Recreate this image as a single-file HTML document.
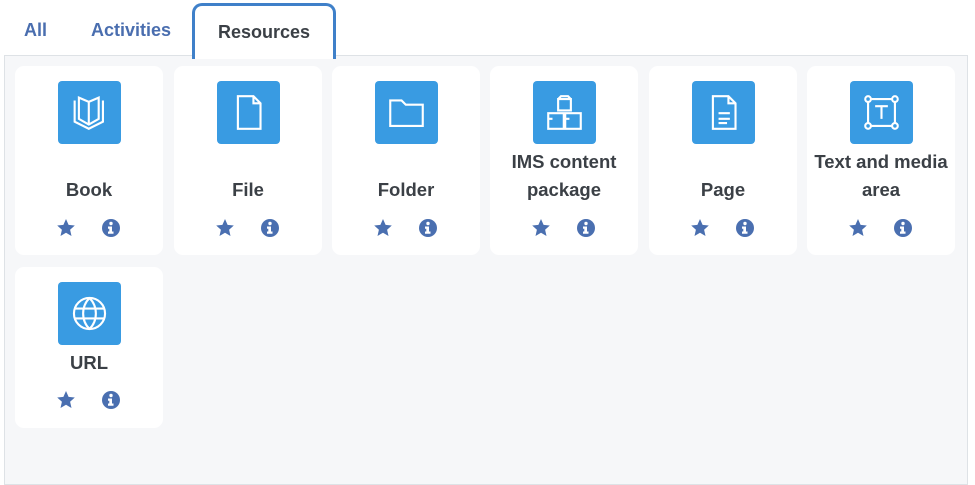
<!DOCTYPE html>
<html><head><style>
*{margin:0;padding:0;box-sizing:border-box}
body{width:975px;height:470px;background:#fff;font-family:"Liberation Sans",sans-serif;position:relative;overflow:hidden}
.cont{position:absolute;left:4px;top:55px;width:964px;height:430px;background:#f6f7f9;border:1px solid #dee2e6}
.tab{position:absolute;font-weight:bold;font-size:18px;color:#4a6eaf;top:20px}
.rtab{position:absolute;left:192px;top:3px;width:144px;height:56px;border:3px solid #3f80c9;border-bottom:none;border-radius:10px 10px 0 0;background:#fff;color:#3b4046;font-weight:bold;font-size:18px;text-align:center;padding-top:16px}
.card{position:absolute;width:148px;background:#fff;border-radius:9px}
.ic{position:absolute;left:43px;top:15px;width:63px;height:63px;background:#399be2;border-radius:4px}
.ic svg{position:absolute;left:11px;top:11px}
.t{position:absolute;left:0;width:148px;text-align:center;font-weight:bold;font-size:18.5px;color:#3b4046;line-height:28px}
</style></head><body>
<div class="cont"></div>
<div class="tab" style="left:24px">All</div>
<div class="tab" style="left:91px">Activities</div>
<div class="rtab">Resources</div>

<div class="card" style="left:15px;top:66px;height:189px">
<div class="ic"><svg width="41" height="41" viewBox="0 0 29 29" fill="none" stroke="#fff" stroke-width="1.5"><path d="M4 6v15l10 5 10-5V6M7 4v15l7 4 7-4V4l-7 3zM14 7v16"/></svg></div>
<div class="t" style="top:110px">Book</div>
</div>
<div class="card" style="left:174px;top:66px;height:189px">
<div class="ic"><svg width="41" height="41" viewBox="0 0 29 29" fill="none" stroke="#fff" stroke-width="1.5"><path d="M7 3h11l5 5v18H7zM18 3v5h5"/></svg></div>
<div class="t" style="top:110px">File</div>
</div>
<div class="card" style="left:332px;top:66px;height:189px">
<div class="ic"><svg width="41" height="41" viewBox="0 0 29 29" fill="none" stroke="#fff" stroke-width="1.5"><path d="M3 6h8l3 3h12v15H3z"/></svg></div>
<div class="t" style="top:110px">Folder</div>
</div>
<div class="card" style="left:490px;top:66px;height:189px">
<div class="ic"><svg width="41" height="41" viewBox="0 0 29 29" fill="none" stroke="#fff" stroke-width="1.5"><path d="M10 5h9v8h-9zM3 15h11v11H3zM15 15h11v11H15zM3 19h3M15 19h3M10 5l2-2h5l2 2"/></svg></div>
<div class="t" style="top:82px">IMS content<br>package</div>
</div>
<div class="card" style="left:649px;top:66px;height:189px">
<div class="ic"><svg width="41" height="41" viewBox="0 0 29 29" fill="none" stroke="#fff" stroke-width="1.5"><path d="M7 3h11l5 5v18H7zM18 3v5h5M11 15h8M11 19h8M11 22h6"/></svg></div>
<div class="t" style="top:110px">Page</div>
</div>
<div class="card" style="left:807px;top:66px;height:189px">
<div class="ic"><svg width="41" height="41" viewBox="0 0 29 29" fill="none" stroke="#fff" stroke-width="1.5"><circle cx="5" cy="5" r="2"/><circle cx="24" cy="5" r="2"/><circle cx="5" cy="24" r="2"/><circle cx="24" cy="24" r="2"/><path d="M7 5h15M7 24h15M5 7v15M24 7v15M10 10h9M14.5 10v9"/></svg></div>
<div class="t" style="top:82px">Text and media<br>area</div>
</div>
<div class="card" style="left:15px;top:267px;height:161px">
<div class="ic"><svg width="41" height="41" viewBox="0 0 29 29" fill="none" stroke="#fff" stroke-width="1.5"><circle cx="14.5" cy="14.5" r="11"/><path d="M4 11h21M4 18h21M14.5 3.5c-6 6-6 16 0 22M14.5 3.5c6 6 6 16 0 22"/></svg></div>
<div class="t" style="top:82px">URL</div>
</div>

<svg width="975" height="470" style="position:absolute;left:0;top:0;pointer-events:none">
<defs>
<g id="s"><path fill="#4a6fb0" d="M0-9l2.6 5.9 6.2.6-4.7 4.2 1.4 6.3L0 4.7-5.5 8l1.4-6.3-4.7-4.2 6.2-.6z"/></g>
<g id="i"><circle r="9" fill="#4a6fb0"/><circle cy="-4.5" r="1.7" fill="#fff"/><path d="M-3-1.5h4v5h1.5v2.2h-5.5v-2.2h1.3v-2.8h-1.3z" fill="#fff"/></g>
</defs>
<use href="#s" x="66" y="228"/><use href="#i" x="111" y="228"/>
<use href="#s" x="225" y="228"/><use href="#i" x="270" y="228"/>
<use href="#s" x="383" y="228"/><use href="#i" x="428" y="228"/>
<use href="#s" x="541" y="228"/><use href="#i" x="586" y="228"/>
<use href="#s" x="700" y="228"/><use href="#i" x="745" y="228"/>
<use href="#s" x="858" y="228"/><use href="#i" x="903" y="228"/>
<use href="#s" x="66" y="400"/><use href="#i" x="111" y="400"/>
</svg>
</body></html>
